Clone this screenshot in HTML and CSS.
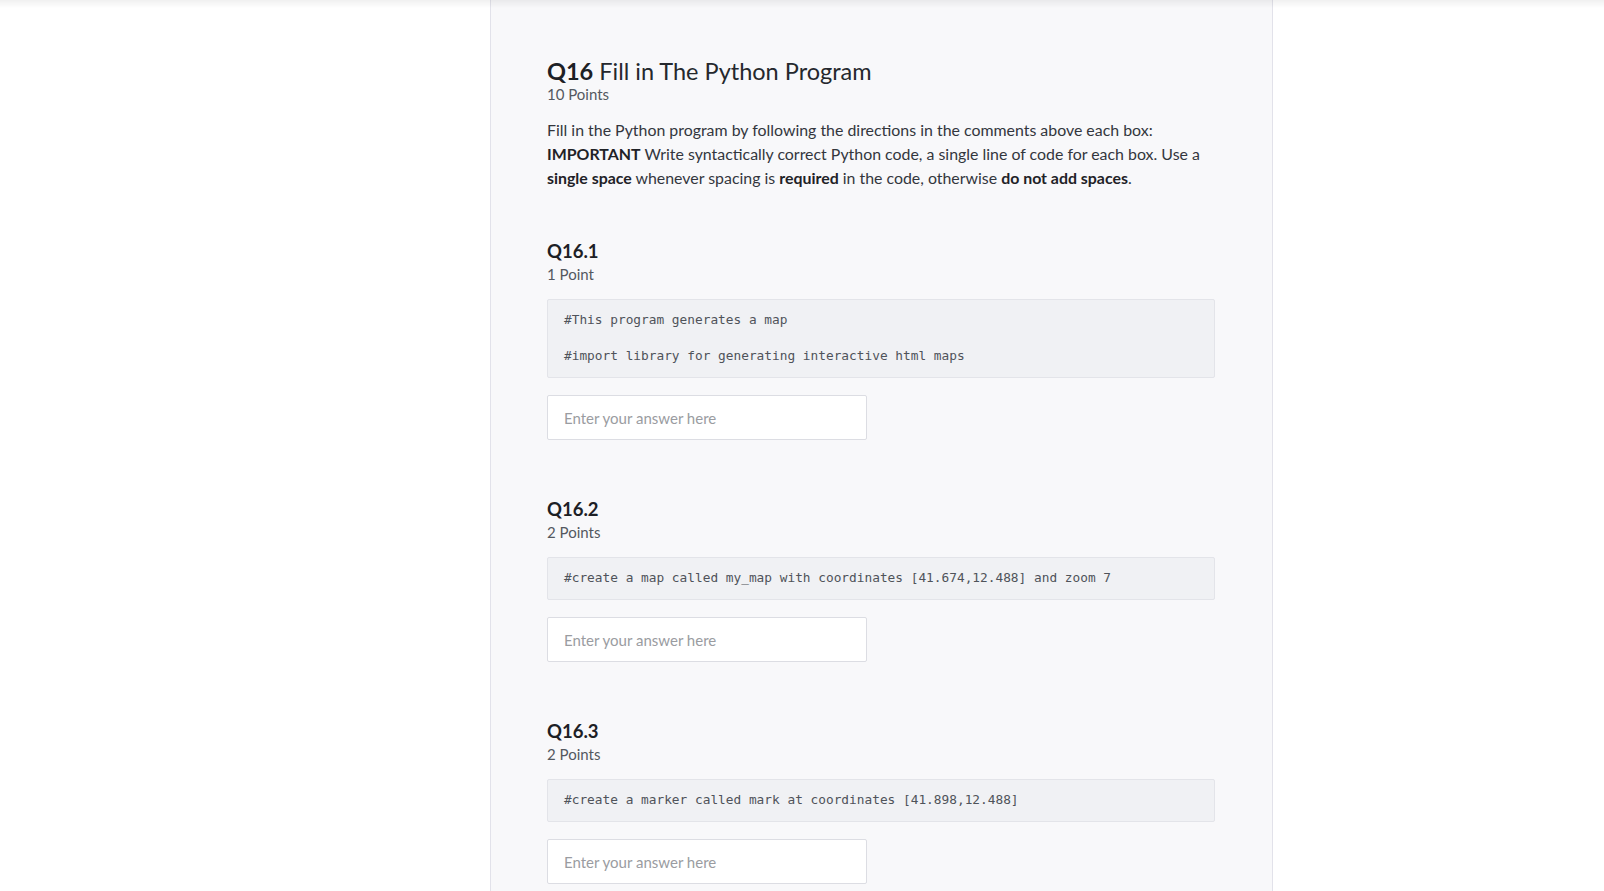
FILE: index.html
```html
<!DOCTYPE html>
<html lang="en">
<head>
<meta charset="utf-8">
<title>Q16 Fill in The Python Program</title>
<link rel="stylesheet" href="styles.css">
</head>
<body>
<div class="topshade"></div>
<div class="page">
  <main class="panel">
    <h1 class="q-title"><b>Q16</b> Fill in The Python Program</h1>
    <div class="points">10 Points</div>
    <p class="intro">Fill in the Python program by following the directions in the comments above each box:<br><b>IMPORTANT</b> Write syntactically correct Python code, a single line of code for each box. Use a <b>single space</b> whenever spacing is <b>required</b> in the code, otherwise <b>do not add spaces</b>.</p>

    <section class="sub first">
      <h2 class="sub-title">Q16.1</h2>
      <div class="points">1 Point</div>
      <div class="code">
        <p>#This program generates a map</p>
        <p>#import library for generating interactive html maps</p>
      </div>
      <input class="answer" type="text" placeholder="Enter your answer here">
    </section>

    <section class="sub">
      <h2 class="sub-title">Q16.2</h2>
      <div class="points">2 Points</div>
      <div class="code">
        <p>#create a map called my_map with coordinates [41.674,12.488] and zoom 7</p>
      </div>
      <input class="answer" type="text" placeholder="Enter your answer here">
    </section>

    <section class="sub">
      <h2 class="sub-title">Q16.3</h2>
      <div class="points">2 Points</div>
      <div class="code">
        <p>#create a marker called mark at coordinates [41.898,12.488]</p>
      </div>
      <input class="answer" type="text" placeholder="Enter your answer here">
    </section>
  </main>
</div>
</body>
</html>
```
FILE: styles.css
```css
* { box-sizing: border-box; }
html, body { margin: 0; padding: 0; }
body {
  background: #ffffff;
  font-family: Lato, "Open Sans", sans-serif;
  color: #33363d;
  height: 891px;
  overflow: hidden;
}
.topshade {
  position: fixed;
  left: 0; right: 0; top: 0;
  height: 8px;
  background: linear-gradient(to bottom, rgba(0,0,0,0.06), rgba(0,0,0,0));
  z-index: 5;
  pointer-events: none;
}
.page {
  display: flex;
  padding-left: 490px;
}
.panel {
  width: 783px;
  min-height: 891px;
  background: #f8f8fa;
  border-left: 1px solid #e2e2ea;
  border-right: 1px solid #e2e2ea;
  padding: 57px 0 0 56px;
}
.q-title {
  margin: 0;
  font-size: 23.5px;
  line-height: 28px;
  font-weight: 400;
  color: #25282d;
}
.q-title b { font-weight: 700; color: #1d2025; }
.points {
  font-size: 15px;
  line-height: 18px;
  color: #545860;
}
.intro {
  margin: 15px 0 0;
  width: 668px;
  font-size: 15.9px;
  line-height: 24px;
  color: #33363d;
}
.intro b { font-weight: 700; color: #1f2227; }
.sub { width: 668px; margin-top: 56px; }
.sub.first { margin-top: 48px; }
.sub-title {
  margin: 0;
  font-size: 18.5px;
  line-height: 27px;
  font-weight: 700;
  color: #1d2025;
}
.code {
  margin-top: 16px;
  background: #f0f1f4;
  border: 1px solid #e3e4e9;
  border-radius: 2px;
  padding: 11px 16px 12px;
  font-family: "DejaVu Sans Mono", "Liberation Mono", monospace;
  font-size: 12.8px;
  line-height: 18px;
  color: #4f535a;
}
.code p { margin: 0; }
.code p + p { margin-top: 18px; }
.answer {
  display: block;
  margin-top: 17px;
  width: 320px;
  height: 45px;
  background: #ffffff;
  border: 1px solid #dcdde3;
  border-radius: 2px;
  padding: 0 16px;
  font-family: Lato, "Open Sans", sans-serif;
  font-size: 15px;
  color: #33363d;
  outline: none;
}
.answer::placeholder { color: #9a9ca1; }
```
